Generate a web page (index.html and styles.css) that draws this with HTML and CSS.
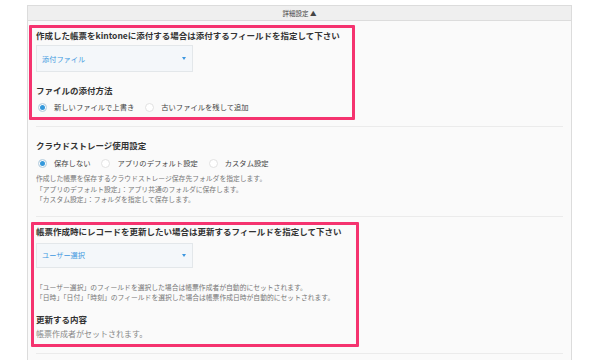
FILE: index.html
```html
<!DOCTYPE html>
<html lang="ja">
<head>
<meta charset="utf-8">
<link rel="stylesheet" href="styles.css">
</head>
<body>
<div class="page">
  <div class="panel">
    <div class="panel-header">詳細設定 ▲</div>
    <div class="panel-body">
      <section class="mark mark-1">
        <div class="heading">作成した帳票をkintoneに添付する場合は添付するフィールドを指定して下さい</div>
        <div class="select select-1"><span>添付ファイル</span><i class="caret"></i></div>
        <div class="heading sub-1">ファイルの添付方法</div>
        <div class="radios radios-1">
          <label class="radio"><span class="dot on"></span>新しいファイルで上書き</label>
          <label class="radio"><span class="dot"></span>古いファイルを残して追加</label>
        </div>
      </section>
      <div class="sep sep-1"></div>
      <section class="plain">
        <div class="heading">クラウドストレージ使用設定</div>
        <div class="radios radios-2">
          <label class="radio"><span class="dot on"></span>保存しない</label>
          <label class="radio"><span class="dot"></span>アプリのデフォルト設定</label>
          <label class="radio"><span class="dot"></span>カスタム設定</label>
        </div>
        <div class="help help-1">
          <div>作成した帳票を保存するクラウドストレージ保存先フォルダを指定します。</div>
          <div>「アプリのデフォルト設定」：アプリ共通のフォルダに保存します。</div>
          <div>「カスタム設定」：フォルダを指定して保存します。</div>
        </div>
      </section>
      <div class="sep sep-2"></div>
      <section class="mark mark-2">
        <div class="heading">帳票作成時にレコードを更新したい場合は更新するフィールドを指定して下さい</div>
        <div class="select select-2"><span>ユーザー選択</span><i class="caret"></i></div>
        <div class="help help-2">
          <div>「ユーザー選択」のフィールドを選択した場合は帳票作成者が自動的にセットされます。</div>
          <div>「日時」「日付」「時刻」のフィールドを選択した場合は帳票作成日時が自動的にセットされます。</div>
        </div>
        <div class="heading sub-2">更新する内容</div>
        <div class="value">帳票作成者がセットされます。</div>
      </section>
      <div class="sep sep-3"></div>
    </div>
  </div>
</div>
</body>
</html>
```
FILE: styles.css
```css
html, body {
  margin: 0;
  padding: 0;
  background: #ffffff;
}
body {
  font-family: "Noto Sans CJK JP", "Noto Sans", sans-serif;
  color: #333;
  height: 360px;
  overflow: hidden;
}
.page {
  padding: 5px 0 0 27px;
}
.panel {
  width: 543px;
  border: 1px solid #dcdcdc;
  border-bottom: none;
  background: #fafafa;
  min-height: 360px;
}
.panel-header {
  height: 14px;
  line-height: 14px;
  background: #efefef;
  border-bottom: 1px solid #dcdcdc;
  text-align: center;
  font-size: 6.5px;
  color: #444;
}
.panel-body {
  display: flex;
  flex-direction: column;
  align-items: flex-start;
}
.mark {
  border: 3px solid #f5336f;
  border-radius: 1px;
  display: flex;
  flex-direction: column;
  align-items: flex-start;
}
.mark-1 {
  width: 316px;
  margin: 4px 0 0 1px;
  padding: 1px 0 0 4px;
  height: 88px;
}
.mark-2 {
  width: 320px;
  margin: 5px 0 0 3px;
  padding: 0 0 0 2px;
  height: 119px;
}
.plain {
  margin-left: 8px;
  display: flex;
  flex-direction: column;
  align-items: flex-start;
}
.heading {
  font-size: 8.5px;
  line-height: 12px;
  font-weight: bold;
  color: #333;
  white-space: nowrap;
}
.plain .heading {
  margin-top: 12px;
}
.select {
  width: 155px;
  border: 1px solid #e3e7ea;
  background: #f4f7fa;
  display: flex;
  align-items: center;
  justify-content: space-between;
  padding: 0 5px 0 5px;
  box-sizing: border-box;
  width: 157px;
  font-size: 7.2px;
  color: #3d97e0;
}
.select-1 {
  height: 27px;
  margin-top: 4px;
}
.select-2 {
  height: 25px;
  margin-top: 6px;
}
.caret {
  width: 0;
  height: 0;
  border-left: 2.5px solid transparent;
  border-right: 2.5px solid transparent;
  border-top: 3px solid #3d97e0;
  margin-right: 1px;
}
.sub-1 {
  margin-top: 12px;
}
.sub-2 {
  margin-top: 11px;
}
.radios {
  display: flex;
  gap: 11px;
  height: 12px;
  align-items: center;
}
.radios-1 {
  margin-top: 5px;
  margin-left: 2px;
}
.radios-2 {
  margin-top: 6px;
  margin-left: 2px;
}
.radio {
  display: flex;
  align-items: center;
  gap: 7px;
  font-size: 7.3px;
  color: #444;
  white-space: nowrap;
}
.dot {
  width: 9px;
  height: 9px;
  border-radius: 50%;
  background: #ffffff;
  border: 1px solid #e2e2e2;
  box-sizing: border-box;
  position: relative;
}
.dot.on {
  background: #3498db;
  border: 1px solid #d6dde3;
  box-shadow: inset 0 0 0 1px #ffffff;
}
.help {
  font-size: 6.8px;
  color: #777;
  white-space: nowrap;
}
.help-1 {
  margin-top: 4px;
  line-height: 10.5px;
}
.help-2 {
  margin-top: 14px;
  line-height: 10px;
}
.value {
  margin-top: 3px;
  font-size: 8px;
  line-height: 12px;
  color: #888;
}
.sep {
  width: 527px;
  height: 1px;
  background: #ebebeb;
  margin-left: 8px;
}
.sep-1 {
  margin-top: 6px;
}
.sep-2 {
  margin-top: 11px;
}
.sep-3 {
  margin-top: 6px;
}
```
